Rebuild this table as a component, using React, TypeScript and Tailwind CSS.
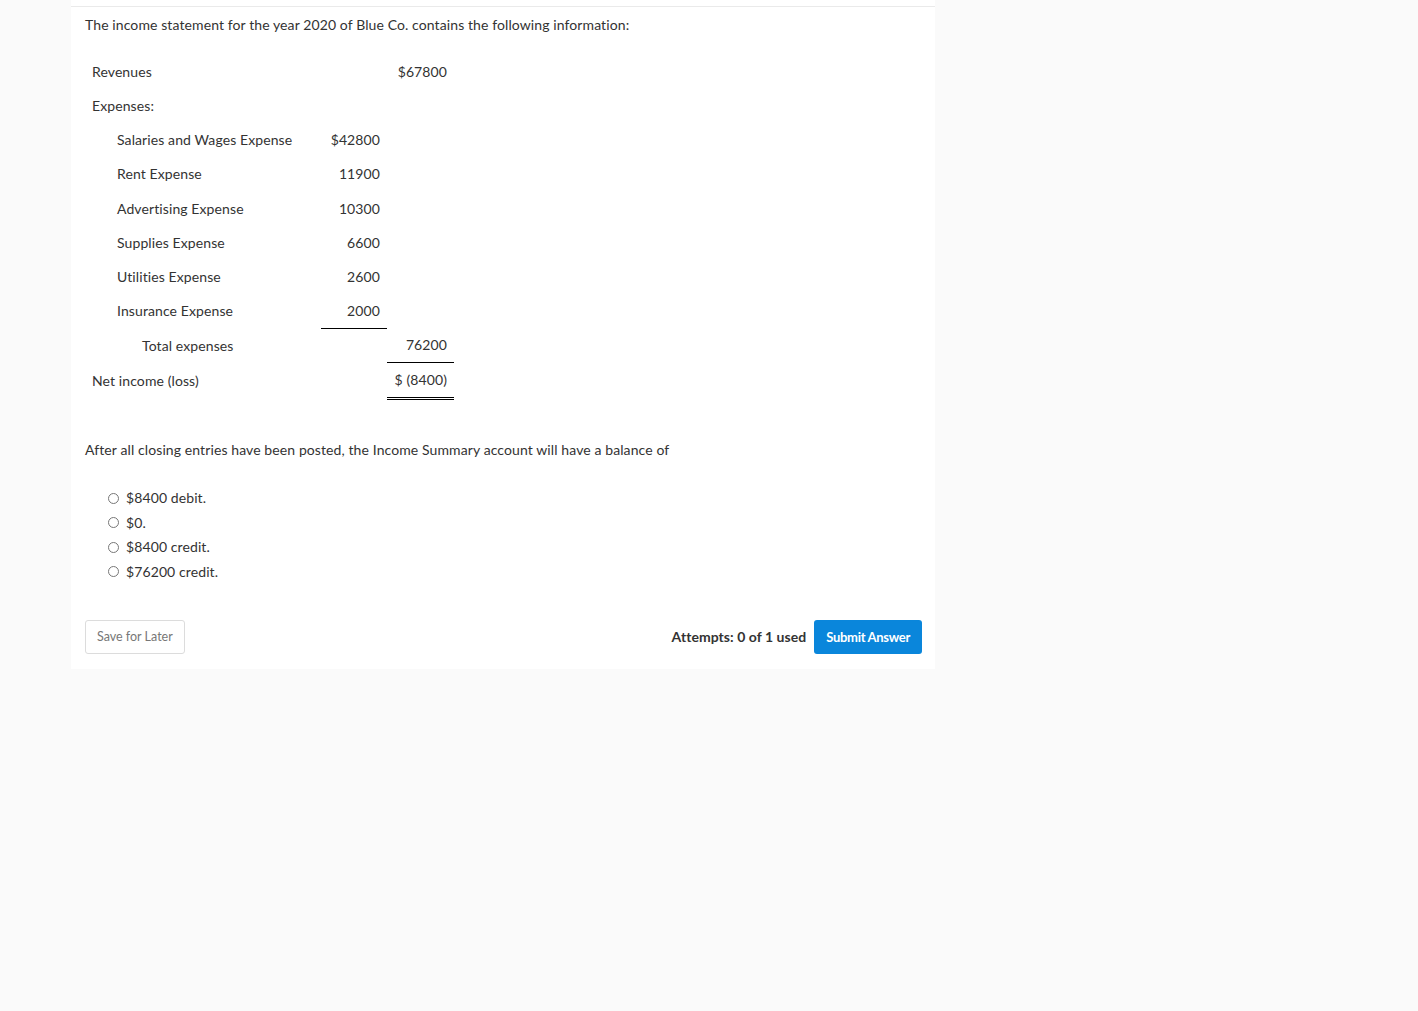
import React from 'react'

type Row = {
  label: string
  indent: number
  col2?: string
  col3?: string
  col2Border?: boolean
  col3Border?: 'single' | 'double'
}

const rows: Row[] = [
  { label: 'Revenues', indent: 0, col3: '$67800' },
  { label: 'Expenses:', indent: 0 },
  { label: 'Salaries and Wages Expense', indent: 1, col2: '$42800' },
  { label: 'Rent Expense', indent: 1, col2: '11900' },
  { label: 'Advertising Expense', indent: 1, col2: '10300' },
  { label: 'Supplies Expense', indent: 1, col2: '6600' },
  { label: 'Utilities Expense', indent: 1, col2: '2600' },
  { label: 'Insurance Expense', indent: 1, col2: '2000', col2Border: true },
  { label: 'Total expenses', indent: 2, col3: '76200', col3Border: 'single' },
  { label: 'Net income (loss)', indent: 0, col3: '$ (8400)', col3Border: 'double' },
]

const options = ['$8400 debit.', '$0.', '$8400 credit.', '$76200 credit.']

export default function App() {
  return (
    <div className="min-h-[1011px] bg-[#fafafa] font-['Lato',sans-serif] text-[14px] leading-5 tracking-[0.1px] text-[#333]">
      <div className="ml-[71px] w-[864px] bg-white pt-[6px] pb-[15px]">
        <div className="border-t border-[#eaeaea] pr-[13px] pl-[14px] pt-[8px]">
          <p>The income statement for the year 2020 of Blue Co. contains the following information:</p>

          {/* ==================== STATEMENT ==================== */}
          <table className="mt-[20px] border-collapse">
            <tbody>
              {rows.map((row) => (
                <tr key={row.label}>
                  <td className="h-[34.15px] w-[236px] py-[7px] pr-[7px]">
                    <span
                      className={
                        row.indent === 0 ? 'pl-[7px]' : row.indent === 1 ? 'pl-[32px]' : 'pl-[57px]'
                      }
                    >
                      {row.label}
                    </span>
                  </td>
                  <td
                    className={`h-[34.15px] w-[66px] px-[7px] py-[7px] text-right ${
                      row.col2Border ? 'border-b border-black' : ''
                    }`}
                  >
                    {row.col2}
                  </td>
                  <td
                    className={`h-[34.15px] w-[67px] px-[7px] py-[7px] text-right ${
                      row.col3Border === 'single'
                        ? 'border-b border-black'
                        : row.col3Border === 'double'
                          ? 'border-b-[3px] border-double border-black'
                          : ''
                    }`}
                  >
                    {row.col3}
                  </td>
                </tr>
              ))}
            </tbody>
          </table>

          <p className="mt-[40px]">
            After all closing entries have been posted, the Income Summary account will have a balance of
          </p>

          {/* ==================== OPTIONS ==================== */}
          <div className="mt-[28px] flex flex-col gap-[4.35px] pl-[23px]">
            {options.map((opt) => (
              <label key={opt} className="flex h-[20px] items-center gap-[7px]">
                <span className="h-[11px] w-[11px] rounded-full border border-[#777] bg-white" />
                <span>{opt}</span>
              </label>
            ))}
          </div>

          {/* ==================== FOOTER ==================== */}
          <div className="mt-[38px] flex items-center justify-between">
            <button className="h-[34px] rounded-[3px] border border-[#dcdcdc] bg-white px-[11px] text-[12.5px] tracking-normal text-[#777]">
              Save for Later
            </button>
            <div className="flex items-center gap-[8px]">
              <span className="font-bold tracking-[0.05px] text-[#333]">Attempts: 0 of 1 used</span>
              <button className="h-[34px] rounded-[3px] bg-[#0a86db] px-[12px] text-[13px] font-bold tracking-[-0.3px] text-white">
                Submit Answer
              </button>
            </div>
          </div>
        </div>
      </div>
    </div>
  )
}
